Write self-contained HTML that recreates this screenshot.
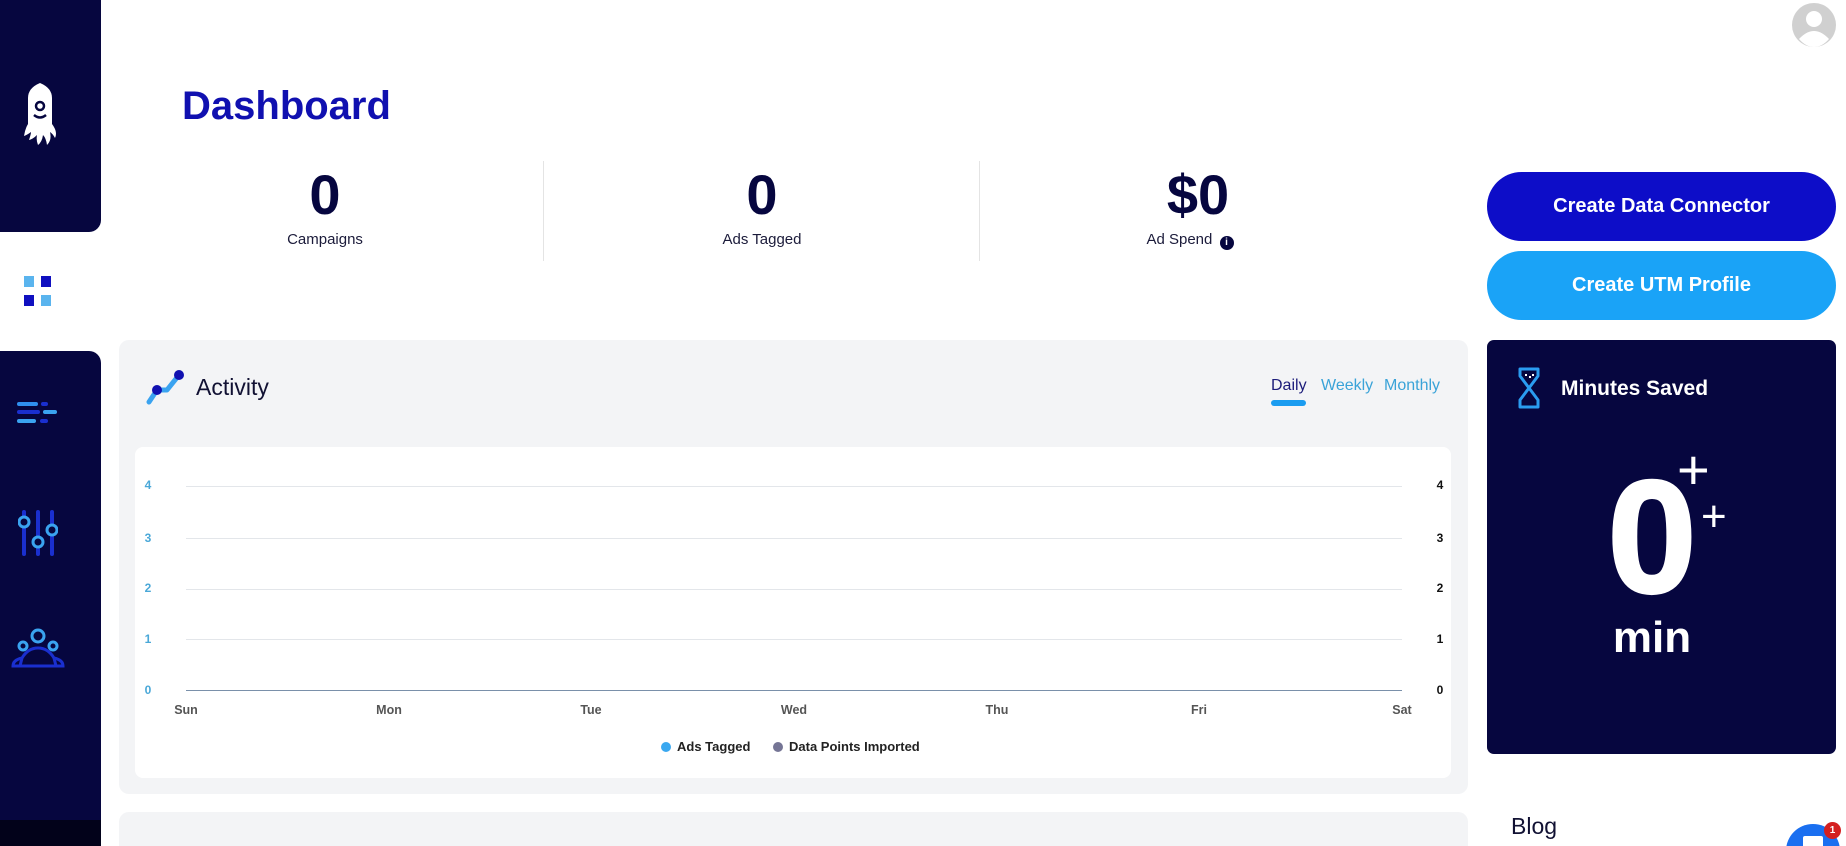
<!DOCTYPE html>
<html><head><meta charset="utf-8"><style>
*{margin:0;padding:0;box-sizing:border-box}
html,body{width:1846px;height:846px;overflow:hidden}
body{background:#fff;font-family:"Liberation Sans",sans-serif}
#w{position:relative;width:1846px;height:846px;overflow:hidden}
.a{position:absolute}
.num{position:absolute;font-weight:bold;font-size:56px;color:#06063f;text-align:center;width:300px;top:162px}
.lbl{position:absolute;font-size:15px;color:#1b1b3a;text-align:center;width:300px;top:231px}
.yl{position:absolute;font-size:12px;font-weight:bold;color:#4aa8d8;width:20px;text-align:center}
.yr{position:absolute;font-size:12px;font-weight:bold;color:#111;width:20px;text-align:center}
.gl{position:absolute;left:186px;width:1216px;height:1px;background:#e3e6ea}
.xl{position:absolute;top:703px;font-size:12.5px;font-weight:bold;color:#555;width:60px;text-align:center}
</style></head><body><div id="w">
<div class="a" style="left:0;top:0;width:101px;height:232px;background:#06063f;border-bottom-right-radius:12px"></div>
<div class="a" style="left:0;top:351px;width:101px;height:495px;background:#06063f;border-top-right-radius:12px"></div>
<div class="a" style="left:0;top:820px;width:101px;height:26px;background:#02021a"></div>
<svg class="a" style="left:22px;top:82px" width="36" height="66" viewBox="0 0 36 66">
<path d="M18 1 Q30 6 30 16 L30 42 Q36 50 33 56 Q31 52 28 50 Q30 58 25 63 Q24 56 21 53 Q20 60 16 63 Q14 58 15 53 Q11 57 7 58 Q9 52 9 50 Q5 53 2 54 Q3 47 6 42 L6 16 Q6 6 18 1 Z" fill="#fff"/>
<circle cx="18" cy="24" r="4" fill="none" stroke="#06063f" stroke-width="2.5"/>
<path d="M12 33 Q18 38 24 33" fill="none" stroke="#06063f" stroke-width="2.5"/>
</svg>
<div class="a" style="left:24px;top:276px;width:10px;height:11px;background:#5ab4ee"></div>
<div class="a" style="left:41px;top:276px;width:10px;height:11px;background:#1010c0"></div>
<div class="a" style="left:24px;top:295px;width:10px;height:11px;background:#1010c0"></div>
<div class="a" style="left:41px;top:295px;width:10px;height:11px;background:#5ab4ee"></div>
<svg class="a" style="left:16px;top:400px" width="42" height="30">
<g stroke-linecap="round" stroke-width="4">
<line x1="3" y1="4" x2="20" y2="4" stroke="#2f8fef"/><line x1="27" y1="4" x2="30" y2="4" stroke="#1a2fcf"/>
<line x1="3" y1="12" x2="22" y2="12" stroke="#1a2fcf"/><line x1="29" y1="12" x2="39" y2="12" stroke="#3aa3f0"/>
<line x1="3" y1="21" x2="18" y2="21" stroke="#3aa3f0"/><line x1="26" y1="21" x2="30" y2="21" stroke="#1a2fcf"/>
</g></svg>
<svg class="a" style="left:18px;top:508px" width="40" height="50">
<g stroke="#1a2fcf" stroke-width="4" stroke-linecap="round"><line x1="6" y1="4" x2="6" y2="46"/><line x1="20" y1="4" x2="20" y2="46"/><line x1="34" y1="4" x2="34" y2="46"/></g>
<g fill="#06063f" stroke="#3aa3f0" stroke-width="3"><circle cx="6" cy="14" r="5"/><circle cx="20" cy="34" r="5"/><circle cx="34" cy="22" r="5"/></g>
</svg>
<svg class="a" style="left:10px;top:628px" width="56" height="42">
<g fill="none" stroke-width="3"><circle cx="28" cy="8" r="6" stroke="#3aa3f0"/><circle cx="13" cy="18" r="4" stroke="#3aa3f0"/><circle cx="43" cy="18" r="4" stroke="#3aa3f0"/>
<path d="M3 38 L53 38 Q53 32 44 30 Q38 20 28 20 Q18 20 12 30 Q3 32 3 38 Z" stroke="#1a2fcf"/><path d="M12 30 L10 38 M44 30 L46 38" stroke="#1a2fcf"/></g>
</svg>
<div class="a" style="left:182px;top:84px;font-size:40px;font-weight:bold;color:#1010b0">Dashboard</div>
<div class="num" style="left:175px">0</div><div class="lbl" style="left:175px">Campaigns</div>
<div class="a" style="left:543px;top:161px;width:1px;height:100px;background:#e4e4e4"></div>
<div class="num" style="left:612px">0</div><div class="lbl" style="left:612px">Ads Tagged</div>
<div class="a" style="left:979px;top:161px;width:1px;height:100px;background:#e4e4e4"></div>
<div class="num" style="left:1048px">$0</div><div class="lbl" style="left:1040px">Ad Spend <span style="display:inline-block;width:14px;height:14px;border-radius:50%;background:#06063f;color:#fff;font-size:10px;line-height:14px;font-weight:bold;vertical-align:-1px;margin-left:3px">i</span></div>
<div class="a" style="left:119px;top:340px;width:1349px;height:454px;background:#f3f4f6;border-radius:10px"></div>
<div class="a" style="left:119px;top:812px;width:1349px;height:60px;background:#f3f4f6;border-radius:10px"></div>
<svg class="a" style="left:144px;top:370px" width="42" height="36">
<path d="M5 32 L13 20 L23 20 L35 5" fill="none" stroke="#3aa3f0" stroke-width="5" stroke-linecap="round" stroke-linejoin="round"/>
<circle cx="13" cy="20" r="5" fill="#1010b0"/><circle cx="35" cy="5" r="5" fill="#1010b0"/></svg>
<div class="a" style="left:196px;top:374px;font-size:23px;color:#111133">Activity</div>
<div class="a" style="left:1271px;top:377px;font-size:16px;color:#1c1c7a">Daily</div>
<div class="a" style="left:1321px;top:377px;font-size:16px;color:#3aa3d8">Weekly</div>
<div class="a" style="left:1384px;top:377px;font-size:16px;color:#3aa3d8">Monthly</div>
<div class="a" style="left:1271px;top:400px;width:35px;height:6px;border-radius:3px;background:#1a9cf0"></div>
<div class="a" style="left:135px;top:447px;width:1316px;height:331px;background:#fff;border-radius:8px"></div>
<div class="gl" style="top:486px"></div><div class="gl" style="top:538px"></div><div class="gl" style="top:589px"></div><div class="gl" style="top:639px"></div>
<div class="gl" style="top:690px;background:#7a90aa"></div>
<div class="yl" style="left:138px;top:478px">4</div><div class="yl" style="left:138px;top:531px">3</div><div class="yl" style="left:138px;top:581px">2</div><div class="yl" style="left:138px;top:632px">1</div><div class="yl" style="left:138px;top:683px">0</div>
<div class="yr" style="left:1430px;top:478px">4</div><div class="yr" style="left:1430px;top:531px">3</div><div class="yr" style="left:1430px;top:581px">2</div><div class="yr" style="left:1430px;top:632px">1</div><div class="yr" style="left:1430px;top:683px">0</div>
<div class="xl" style="left:156px">Sun</div><div class="xl" style="left:359px">Mon</div><div class="xl" style="left:561px">Tue</div><div class="xl" style="left:764px">Wed</div><div class="xl" style="left:967px">Thu</div><div class="xl" style="left:1169px">Fri</div><div class="xl" style="left:1372px">Sat</div>
<div class="a" style="left:661px;top:742px;width:10px;height:10px;border-radius:50%;background:#3aa8f0"></div>
<div class="a" style="left:677px;top:739px;font-size:13px;font-weight:bold;color:#222">Ads Tagged</div>
<div class="a" style="left:773px;top:742px;width:10px;height:10px;border-radius:50%;background:#757595"></div>
<div class="a" style="left:789px;top:739px;font-size:13px;font-weight:bold;color:#222">Data Points Imported</div>
<svg class="a" style="left:1792px;top:3px" width="44" height="44"><circle cx="22" cy="22" r="22" fill="#d0d0d0"/><circle cx="22" cy="16" r="8" fill="#fff"/><path d="M7 36 Q22 20 37 36 Q30 44 22 44 Q14 44 7 36Z" fill="#fff"/></svg>
<div class="a" style="left:1487px;top:172px;width:349px;height:69px;border-radius:35px;background:#0d0dc8;color:#fff;font-weight:bold;font-size:20px;text-align:center;line-height:69px">Create Data Connector</div>
<div class="a" style="left:1487px;top:251px;width:349px;height:69px;border-radius:35px;background:#1aa3f7;color:#fff;font-weight:bold;font-size:20px;text-align:center;line-height:69px">Create UTM Profile</div>
<div class="a" style="left:1487px;top:340px;width:349px;height:414px;border-radius:7px;background:#06063f"></div>
<svg class="a" style="left:1517px;top:366px" width="24" height="44"><path d="M3 3 L21 3 L21 10 L12 22 L21 34 L21 41 L3 41 L3 34 L12 22 L3 10 Z" fill="none" stroke="#2a9cf0" stroke-width="3" stroke-linejoin="round"/><g fill="#fff"><rect x="8" y="8" width="2" height="2"/><rect x="12" y="10" width="2" height="2"/><rect x="15" y="8" width="2" height="2"/></g></svg>
<div class="a" style="left:1561px;top:377px;font-size:21px;font-weight:bold;color:#fff">Minutes Saved</div>
<div class="a" style="left:1552px;top:458px;width:200px;text-align:center;font-size:160px;font-weight:bold;color:#fff;line-height:158px;-webkit-text-stroke:3px #fff">0</div>
<div class="a" style="left:1677px;top:442px;font-size:56px;color:#fff;line-height:56px">+</div>
<div class="a" style="left:1701px;top:495px;font-size:44px;color:#fff;line-height:44px">+</div>
<div class="a" style="left:1552px;top:613px;width:200px;text-align:center;font-size:44px;font-weight:bold;color:#fff">min</div>
<div class="a" style="left:1511px;top:813px;font-size:23px;color:#111133">Blog</div>
<div class="a" style="left:1786px;top:824px;width:54px;height:54px;border-radius:50%;background:#1a6ff0"></div>
<div class="a" style="left:1803px;top:836px;width:20px;height:20px;background:#fff;border-radius:2px"></div>
<div class="a" style="left:1824px;top:822px;width:17px;height:17px;border-radius:50%;background:#d42020;color:#fff;font-size:10px;font-weight:bold;text-align:center;line-height:17px">1</div>
</div></body></html>
